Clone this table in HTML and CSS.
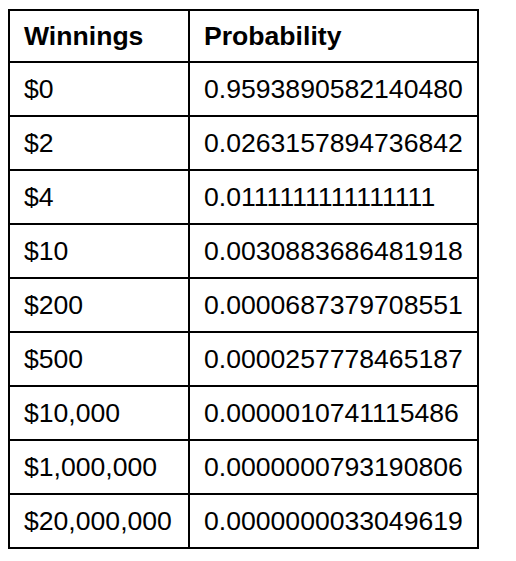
FILE: index.html
```html
<!DOCTYPE html>
<html>
<head>
<meta charset="utf-8">
<link rel="stylesheet" href="styles.css">
</head>
<body>
<table class="odds">
  <colgroup><col class="c-win"><col class="c-prob"></colgroup>
  <thead>
    <tr><th>Winnings</th><th>Probability</th></tr>
  </thead>
  <tbody>
    <tr><td>$0</td><td>0.9593890582140480</td></tr>
    <tr><td>$2</td><td>0.0263157894736842</td></tr>
    <tr><td>$4</td><td>0.0111111111111111</td></tr>
    <tr><td>$10</td><td>0.0030883686481918</td></tr>
    <tr><td>$200</td><td>0.0000687379708551</td></tr>
    <tr><td>$500</td><td>0.0000257778465187</td></tr>
    <tr><td>$10,000</td><td>0.0000010741115486</td></tr>
    <tr><td>$1,000,000</td><td>0.0000000793190806</td></tr>
    <tr><td>$20,000,000</td><td>0.0000000033049619</td></tr>
  </tbody>
</table>
</body>
</html>
```
FILE: styles.css
```css
html, body {
  margin: 0;
  padding: 0;
  background: #fff;
}
body {
  padding: 9px 0 0 8px;
  font-family: "Liberation Sans", Arial, sans-serif;
  color: #000;
}
.odds {
  border-collapse: separate;
  border-spacing: 0;
  table-layout: fixed;
  width: 471px;
  border-left: 2px solid #000;
  border-top: 2px solid #000;
}
.c-win { width: 180px; }
.c-prob { width: 289px; }
.odds th,
.odds td {
  box-sizing: border-box;
  height: 54px;
  padding: 0 0 0 14px;
  border-right: 2px solid #000;
  border-bottom: 2px solid #000;
  font-size: 26.6px;
  line-height: 30px;
  text-align: left;
  vertical-align: middle;
  white-space: nowrap;
}
.odds thead th {
  font-weight: bold;
}
.odds thead tr:first-child th {
  height: 52px;
}
```
